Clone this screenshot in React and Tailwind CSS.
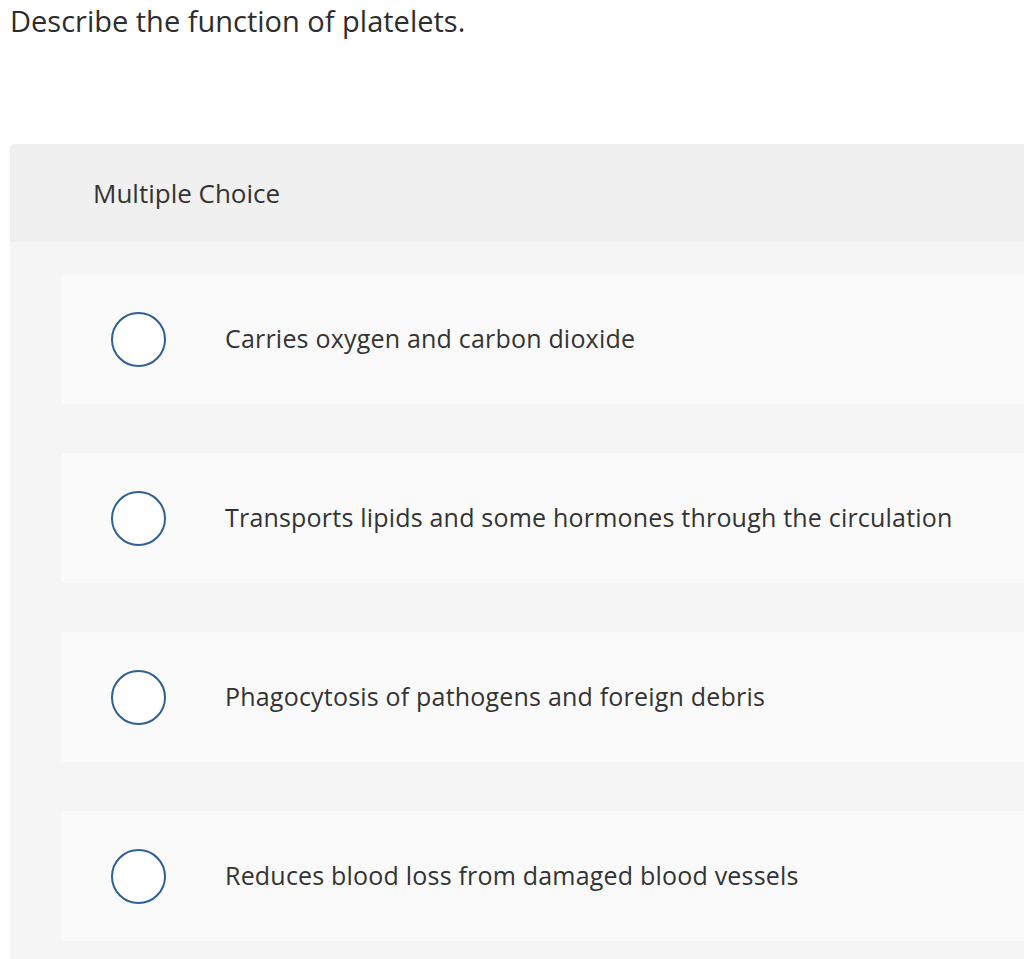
const choices = [
  "Carries oxygen and carbon dioxide",
  "Transports lipids and some hormones through the circulation",
  "Phagocytosis of pathogens and foreign debris",
  "Reduces blood loss from damaged blood vessels",
];

const Radio = () => (
  <span className="block h-[55px] w-[55px] shrink-0 rounded-full border-2 border-[#2f5f95] bg-white" />
);

export default function App() {
  return (
    <div
      className="h-[959px] overflow-hidden bg-white text-[#333333]"
      style={{ fontFamily: "'Open Sans', 'Noto Sans', sans-serif" }}
    >
      <h1 className="pl-[10px] pt-[2px] text-[29px] leading-[38px] text-[#2d2d2d]">
        Describe the function of platelets.
      </h1>

      <div className="ml-[10px] mt-[104px] w-[1040px] rounded-tl-[4px] bg-[#f5f5f5]">
        <div className="flex h-[98px] items-center rounded-tl-[4px] bg-[#f0f0f0] pl-[83px] text-[26px]">
          Multiple Choice
        </div>
        <ul className="flex flex-col gap-[49px] pb-[32px] pl-[51px] pt-[32px]">
          {choices.map((text) => (
            <li
              key={text}
              className="flex h-[130px] items-center rounded-[4px] bg-[#fafafa] pl-[50px]"
            >
              <Radio />
              <span className="ml-[59px] text-[25px] tracking-[0.2px]">{text}</span>
            </li>
          ))}
        </ul>
      </div>
    </div>
  );
}
